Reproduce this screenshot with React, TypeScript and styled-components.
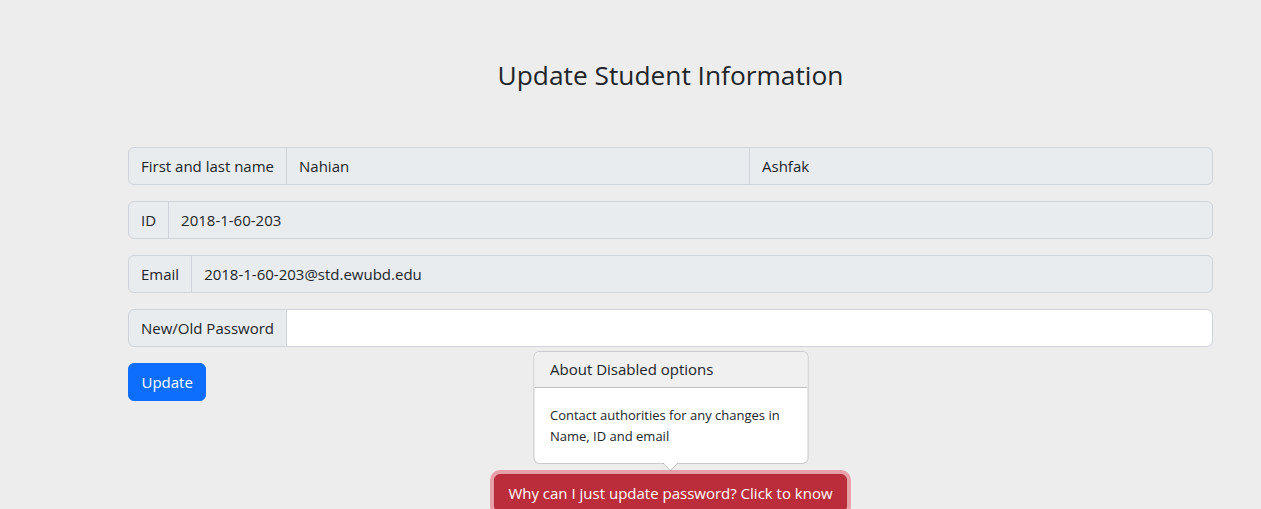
import React from "react";
import { createGlobalStyle, styled } from "styled-components";

const GlobalStyle = createGlobalStyle`
  body {
    margin: 0;
    background-color: #ededed;
    color: #212529;
    font-family: "Open Sans", "Liberation Sans", sans-serif;
    font-size: 15px;
    line-height: 1.5;
  }
`;

const Page = styled.div`
  padding: 58px 48px 0 128px;
`;

const Title = styled.h3`
  margin: 0 0 55px;
  font-size: 26.3px;
  font-weight: 400;
  line-height: 1.3;
  text-align: center;
`;

const Form = styled.form`
  display: flex;
  flex-direction: column;
  gap: 16px;
`;

const InputGroup = styled.div`
  display: flex;
  height: 38px;
`;

const Label = styled.span`
  display: flex;
  align-items: center;
  padding: 0 12px;
  background-color: #e9ecef;
  border: 1px solid #ced4da;
  border-radius: 6px 0 0 6px;
  white-space: nowrap;
`;

const Field = styled.input<{ $last?: boolean }>`
  flex: 1 1 0;
  min-width: 0;
  margin-left: -1px;
  padding: 0 12px;
  font: inherit;
  color: #212529;
  background-color: ${(p) => (p.disabled ? "#e9ecef" : "#fff")};
  border: 1px solid #ced4da;
  border-radius: ${(p) => (p.$last ? "0 6px 6px 0" : "0")};
  outline: none;
`;

const PrimaryButton = styled.button`
  align-self: flex-start;
  height: 38px;
  padding: 0 12.5px;
  font: inherit;
  color: #fff;
  background-color: #0d6efd;
  border: 1px solid #0d6efd;
  border-radius: 6px;
`;

const HelpArea = styled.div`
  position: relative;
  display: flex;
  justify-content: center;
  margin-top: 73px;
`;

const DangerButton = styled.button`
  height: 38px;
  padding: 0 13.5px;
  font: inherit;
  color: #fff;
  background-color: #bb2d3b;
  border: 1px solid #b02a37;
  border-radius: 6px;
  box-shadow: 0 0 0 4px rgba(225, 83, 97, 0.5);
`;

const Popover = styled.div`
  position: absolute;
  bottom: calc(100% + 10px);
  left: 50%;
  transform: translateX(-50%);
  width: 275px;
  box-sizing: border-box;
  background-color: #fff;
  border: 1px solid rgba(0, 0, 0, 0.2);
  border-radius: 6px;

  &::before,
  &::after {
    content: "";
    position: absolute;
    left: 50%;
    transform: translateX(-50%);
    border-style: solid;
    border-color: transparent;
  }
  &::before {
    top: 100%;
    border-width: 8px 8px 0;
    border-top-color: rgba(0, 0, 0, 0.2);
  }
  &::after {
    top: calc(100% - 1px);
    border-width: 8px 8px 0;
    border-top-color: #fff;
  }
`;

const PopoverHeader = styled.div`
  padding: 8px 16px;
  font-size: 15px;
  line-height: 19px;
  background-color: #f0f0f0;
  border-bottom: 1px solid rgba(0, 0, 0, 0.2);
  border-radius: 5px 5px 0 0;
`;

const PopoverBody = styled.div`
  padding: 17px 16px 16px;
  font-size: 13px;
  line-height: 21px;
`;

export default function App() {
  return (
    <>
      <GlobalStyle />
      <Page>
        <Title>Update Student Information</Title>
        <Form onSubmit={(e) => e.preventDefault()}>
          <InputGroup>
            <Label>First and last name</Label>
            <Field disabled defaultValue="Nahian" />
            <Field disabled $last defaultValue="Ashfak" />
          </InputGroup>
          <InputGroup>
            <Label>ID</Label>
            <Field disabled $last defaultValue="2018-1-60-203" />
          </InputGroup>
          <InputGroup>
            <Label>Email</Label>
            <Field disabled $last defaultValue="2018-1-60-203@std.ewubd.edu" />
          </InputGroup>
          <InputGroup>
            <Label>New/Old Password</Label>
            <Field type="password" $last />
          </InputGroup>
          <PrimaryButton type="submit">Update</PrimaryButton>
        </Form>
        <HelpArea>
          <Popover>
            <PopoverHeader>About Disabled options</PopoverHeader>
            <PopoverBody>
              Contact authorities for any changes in Name, ID and email
            </PopoverBody>
          </Popover>
          <DangerButton type="button">
            Why can I just update password? Click to know
          </DangerButton>
        </HelpArea>
      </Page>
    </>
  );
}
